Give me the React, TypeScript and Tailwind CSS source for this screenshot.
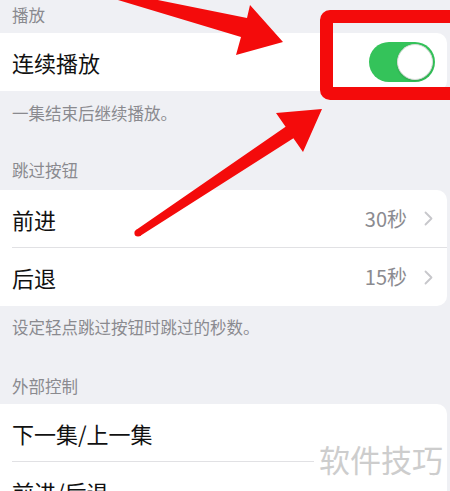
import React from "react";

const cjk = "font-['Noto_Sans_CJK_SC','Noto_Sans',sans-serif]";

function Chevron() {
  return (
    <svg width="9" height="15" viewBox="0 0 9 15" className="shrink-0">
      <polyline points="1.5,1.5 7.5,7.5 1.5,13.5" fill="none" stroke="#c7c7cb" strokeWidth="1.8" strokeLinecap="round" strokeLinejoin="round" />
    </svg>
  );
}

function Toggle({ on }: { on: boolean }) {
  return (
    <div className={`w-[66px] h-[40px] rounded-full p-[2px] flex ${on ? "bg-[#34c35a] justify-end" : "bg-[#e5e5ea] justify-start"}`}>
      <div className="w-[36px] h-[36px] rounded-full bg-white border border-[#d9dcd9] shadow-[0_1px_2px_rgba(0,0,0,0.15)]" />
    </div>
  );
}

function Row({ label, value, divider }: { label: string; value?: string; divider?: boolean }) {
  return (
    <div className="pl-3 flex">
      <div className={`flex-1 h-[58px] flex items-center pr-[14px] ${divider ? "border-b border-[#e1e1e4]" : ""}`}>
        <span className="flex-1 text-[22px] leading-none text-[#111]">{label}</span>
        {value && (
          <div className="flex items-center gap-[17px]">
            <span className="text-[20px] leading-none text-[#8b8b90]">{value}</span>
            <Chevron />
          </div>
        )}
      </div>
    </div>
  );
}

function Arrows() {
  return (
    <svg className="absolute inset-0 pointer-events-none" width="450" height="491" viewBox="0 0 450 491">
      {/* top arrow, pointing into the box */}
      <polygon points="98,-6 128,-6 247,18 250,5 283,42 236,55 241,37" fill="#f40b0b" />
      {/* lower arrow from the skip section up to the box */}
      <polygon points="136,230 285.6,126.7 276,113 322,109 303,152 293.4,138.3 140,236" fill="#f40b0b" />
      <circle cx="138" cy="233" r="3.6" fill="#f40b0b" />
    </svg>
  );
}

const note = "pl-3 text-[16.5px] leading-[22px] text-[#8a8a8f]";

export default function App() {
  return (
    <div className={`relative w-[450px] h-[491px] overflow-hidden bg-[#eff0f4] ${cjk}`}>
      <div className="flex flex-col">
        {/* 播放 */}
        <div className={`${note} h-[33px] pt-[4px]`}>播放</div>
        <div className="bg-white mr-[3px] rounded-r-[10px]">
          <div className="h-[58px] flex items-center pl-3 pr-[12px]">
            <span className="flex-1 text-[22px] leading-none text-[#111]">连续播放</span>
            <Toggle on />
          </div>
        </div>
        <div className={`${note} pt-[11px]`}>一集结束后继续播放。</div>

        {/* 跳过按钮 */}
        <div className={`${note} pt-[35px] pb-[9px]`}>跳过按钮</div>
        <div className="bg-white mr-[3px] rounded-r-[10px] flex flex-col">
          <Row label="前进" value="30秒" divider />
          <Row label="后退" value="15秒" />
        </div>
        <div className={`${note} pt-[10px]`}>设定轻点跳过按钮时跳过的秒数。</div>

        {/* 外部控制 */}
        <div className={`${note} pt-[37px] pb-[7px]`}>外部控制</div>
        <div className="bg-white mr-[3px] rounded-r-[10px] flex flex-col">
          <Row label="下一集/上一集" divider />
          <Row label="前进/后退" />
        </div>
      </div>

      {/* highlight frame round the switch */}
      <div className="absolute left-[320px] top-[10px] w-[150px] h-[90px] border-[13px] border-[#f40b0b] rounded-[10px]" />

      <Arrows />

      <div className="absolute left-[314px] top-[439px] bg-white pl-[5px] pr-[4px] whitespace-nowrap text-[31px] leading-[40px] text-[#cdcdcd]">
        软件技巧
      </div>
    </div>
  );
}
